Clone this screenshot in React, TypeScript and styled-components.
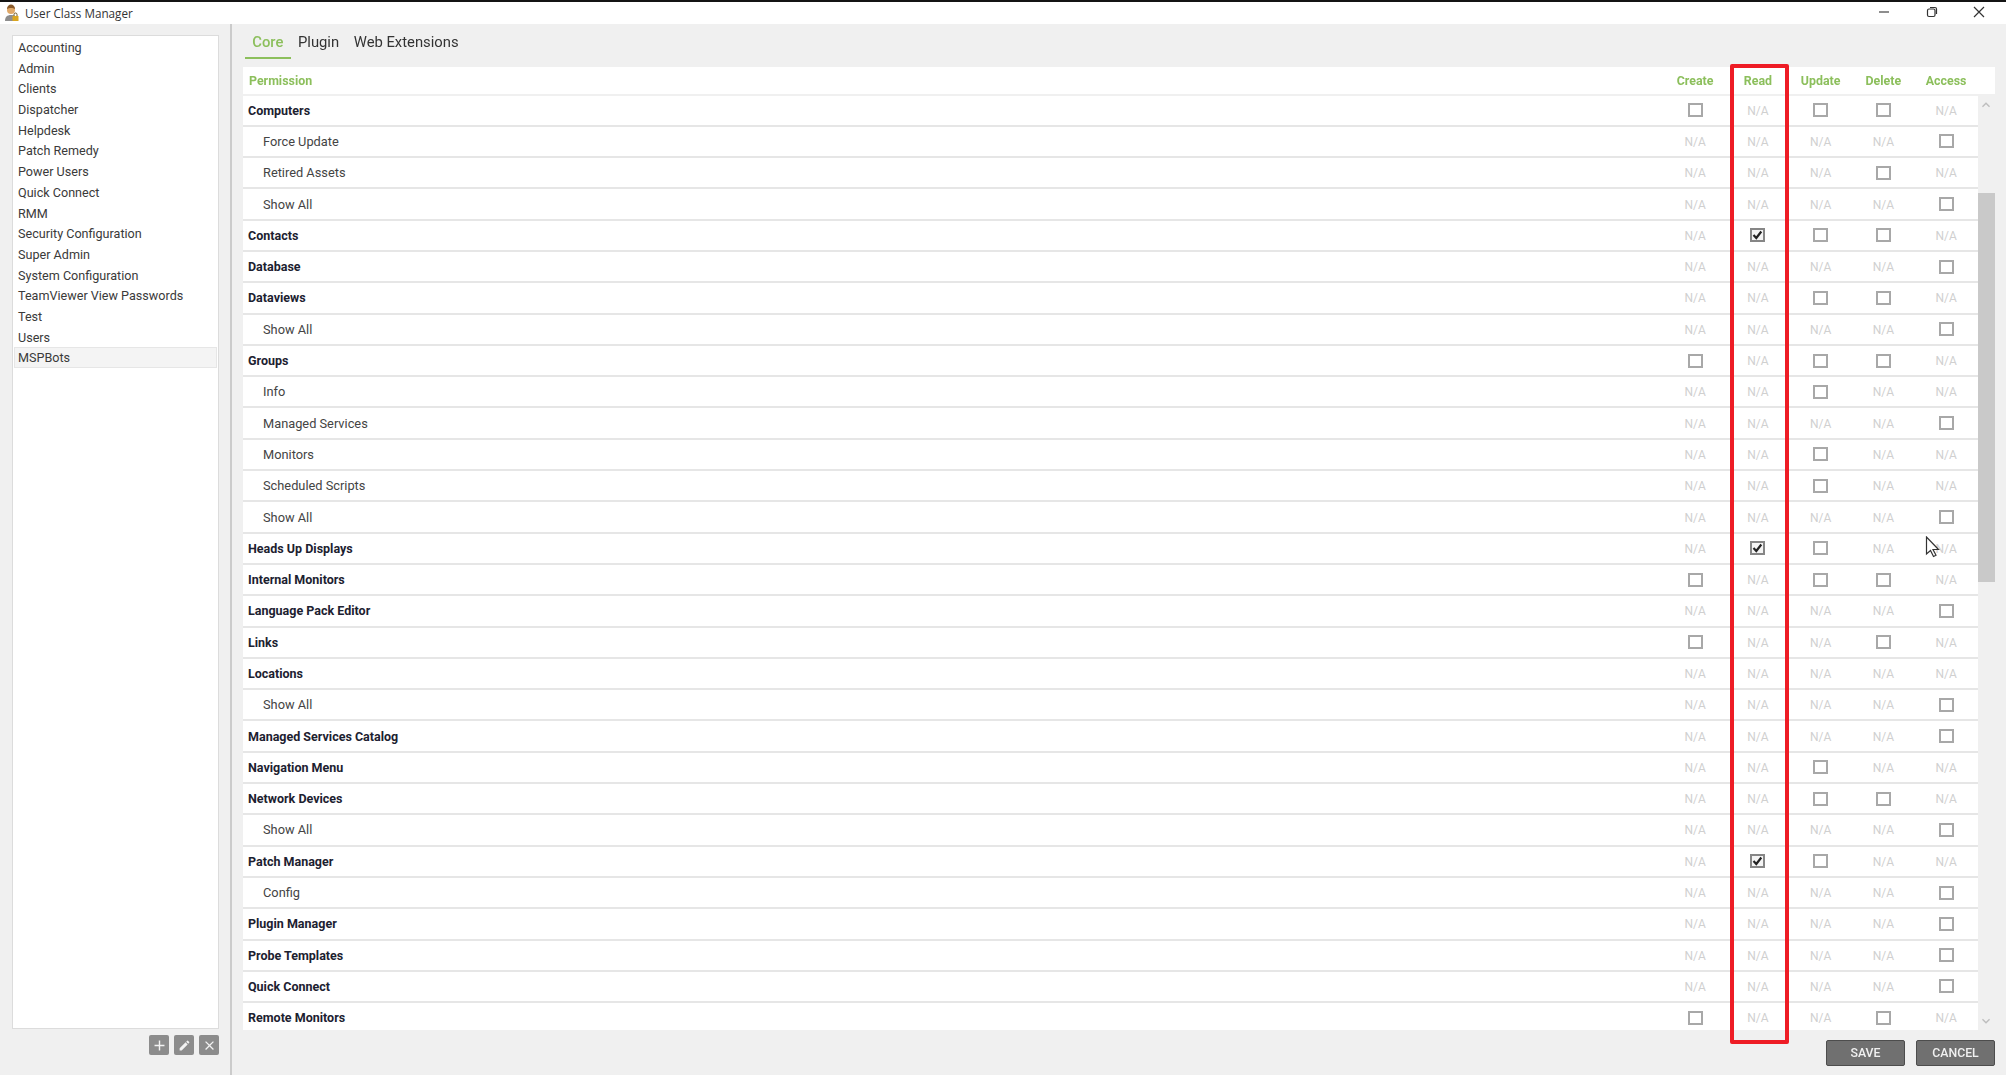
import styled, { createGlobalStyle } from 'styled-components'
import { MdAdd, MdClose, MdEdit, MdKeyboardArrowDown, MdKeyboardArrowUp } from 'react-icons/md'

const GREEN = '#8cbf5c'
const ROW_HEIGHT = 31.3

type Cell = 'na' | 'box' | 'check'

type Permission = {
  name: string,
  child?: boolean,
  cells: Cell[],
}

const GROUPS = [
  'Accounting', 'Admin', 'Clients', 'Dispatcher', 'Helpdesk', 'Patch Remedy', 'Power Users',
  'Quick Connect', 'RMM', 'Security Configuration', 'Super Admin', 'System Configuration',
  'TeamViewer View Passwords', 'Test', 'Users', 'MSPBots',
]

const COLUMNS = ['Create', 'Read', 'Update', 'Delete', 'Access']

// c = create, r = read (checked), u = update, d = delete, a = access
const row = (name: string, flags = '', child = false): Permission => ({
  name,
  child,
  cells: ['c', 'r', 'u', 'd', 'a'].map((f) => {
    if (!flags.includes(f)) return 'na'
    return f === 'r' ? 'check' : 'box'
  }),
})

const PERMISSIONS: Permission[] = [
  row('Computers', 'cud'),
  row('Force Update', 'a', true),
  row('Retired Assets', 'd', true),
  row('Show All', 'a', true),
  row('Contacts', 'rud'),
  row('Database', 'a'),
  row('Dataviews', 'ud'),
  row('Show All', 'a', true),
  row('Groups', 'cud'),
  row('Info', 'u', true),
  row('Managed Services', 'a', true),
  row('Monitors', 'u', true),
  row('Scheduled Scripts', 'u', true),
  row('Show All', 'a', true),
  row('Heads Up Displays', 'ru'),
  row('Internal Monitors', 'cud'),
  row('Language Pack Editor', 'a'),
  row('Links', 'cd'),
  row('Locations'),
  row('Show All', 'a', true),
  row('Managed Services Catalog', 'a'),
  row('Navigation Menu', 'u'),
  row('Network Devices', 'ud'),
  row('Show All', 'a', true),
  row('Patch Manager', 'ru'),
  row('Config', 'a', true),
  row('Plugin Manager', 'a'),
  row('Probe Templates', 'a'),
  row('Quick Connect', 'a'),
  row('Remote Monitors', 'cd'),
]

const GlobalStyle = createGlobalStyle`
  html, body {
    margin: 0;
    height: 100%;
    overflow: hidden;
    background: #f0f0f0;
    font-family: Roboto, "Liberation Sans", sans-serif;
  }
`

const Wrap = styled.div`
  position: relative;
  display: flex;
  flex-direction: column;
  width: 2006px;
  height: 1075px;
  overflow: hidden;
  border-top: 2px solid #141414;
  box-sizing: border-box;
  filter: blur(0.35px);
`

const TitleBar = styled.div`
  display: flex;
  align-items: center;
  flex: none;
  box-sizing: border-box;
  height: 22px;
  padding: 0 0 1px 4px;
  background: #fff;
`

const WindowTitle = styled.span`
  margin-left: 5px;
  font-family: "Open Sans", sans-serif;
  font-size: 11.7px;
  color: #333;
`

const WindowControls = styled.div`
  display: flex;
  align-items: center;
  margin: 0 0 2px auto;
  padding-right: 21px;
  gap: 35.5px;
`

const Body = styled.div`
  display: flex;
  flex: 1;
  min-height: 0;
`

const Sidebar = styled.div`
  display: flex;
  flex-direction: column;
  flex: none;
  box-sizing: border-box;
  width: 232px;
  padding: 11px 11px 0 12px;
  border-right: 2px solid #cbcbcb;
`

const GroupList = styled.div`
  flex: none;
  box-sizing: border-box;
  height: 994px;
  width: 207px;
  padding-top: 1px;
  background: #fff;
  border: 1px solid #dcdcdc;
`

const GroupItem = styled.div<{ $selected?: boolean }>`
  box-sizing: border-box;
  height: 20.7px;
  line-height: 19px;
  padding-left: 3px;
  margin: 0 1px;
  font-size: 12.6px;
  color: #3a3a3a;
  background: ${(p) => (p.$selected ? '#f4f4f4' : 'transparent')};
  border: 1px solid ${(p) => (p.$selected ? '#e6e6e6' : 'transparent')};
`

const GroupTools = styled.div`
  display: flex;
  justify-content: flex-end;
  gap: 5px;
  margin-top: 6px;
`

const ToolButton = styled.div`
  display: flex;
  align-items: center;
  justify-content: center;
  width: 20px;
  height: 20px;
  border-radius: 2px;
  background: #8c8c8c;
  color: #f2f2f2;
`

const Main = styled.div`
  display: flex;
  flex-direction: column;
  flex: 1;
  min-width: 0;
  padding: 0 11px;
`

const Tabs = styled.div`
  display: flex;
  flex: none;
  height: 35px;
  padding-left: 2px;
  margin-bottom: 8px;
`

const Tab = styled.div<{ $active?: boolean }>`
  display: flex;
  align-items: center;
  box-sizing: border-box;
  padding: 2px 7.3px 0;
  font-size: 14.8px;
  color: ${(p) => (p.$active ? GREEN : '#333')};
  font-weight: ${(p) => (p.$active ? 500 : 400)};
  border-bottom: 2px solid ${(p) => (p.$active ? GREEN : 'transparent')};
`

const Grid = styled.div`
  display: grid;
  grid-template-columns: 1fr repeat(5, 62.75px);
  align-items: center;
`

const HeaderRow = styled(Grid)`
  flex: none;
  height: 27px;
  margin-bottom: 1.500px;
  padding-right: 17.5px;
  background: #fff;
  color: ${GREEN};
  font-size: 12.4px;
  font-weight: 700;
`

const HeaderName = styled.div`
  padding-left: 6px;
`

const HeaderCell = styled.div`
  text-align: center;
`

const TableBody = styled.div`
  display: flex;
  flex: none;
  height: 934.5px;
`

const Rows = styled.div`
  flex: 1;
  min-width: 0;
  overflow: hidden;
`

const PermissionRow = styled(Grid)`
  box-sizing: border-box;
  height: ${ROW_HEIGHT}px;
  background: #fff;
  border-bottom: 2px solid #e6e6e6;
`

const RowName = styled.div<{ $child?: boolean }>`
  padding-left: ${(p) => (p.$child ? 20 : 5)}px;
  font-size: ${(p) => (p.$child ? 12.8 : 12.5)}px;
  font-weight: ${(p) => (p.$child ? 400 : 700)};
  color: ${(p) => (p.$child ? '#444' : '#1c2130')};
`

const NotApplicable = styled.div`
  padding-top: 1px;
  text-align: center;
  font-size: 12px;
  color: #d0d0d0;
`

const CheckCell = styled.div`
  display: flex;
  justify-content: center;
`

const Checkbox = styled.div<{ $checked?: boolean }>`
  display: flex;
  align-items: center;
  justify-content: center;
  box-sizing: border-box;
  width: 15px;
  height: 14px;
  border: 2px solid ${(p) => (p.$checked ? '#868686' : '#a8a8a8')};
  background: ${(p) => (p.$checked ? '#f4f4f4' : '#fff')};
`

const Scrollbar = styled.div`
  display: flex;
  flex-direction: column;
  align-items: center;
  flex: none;
  width: 17.5px;
  color: #bdbdbd;
`

const ArrowSlot = styled.div`
  display: flex;
  justify-content: center;
  padding-top: 1px;
  height: 96.5px;
`

const Thumb = styled.div`
  flex: none;
  width: 100%;
  height: 389px;
  background: #c9c9c9;
`

const BottomArrow = styled.div`
  display: flex;
  margin-top: auto;
  padding-bottom: 1px;
`

const Footer = styled.div`
  display: flex;
  justify-content: flex-end;
  gap: 11px;
  margin-top: 10px;
`

const Button = styled.div`
  display: flex;
  align-items: center;
  justify-content: center;
  box-sizing: border-box;
  width: 79px;
  height: 26px;
  border: 1px solid #4d4d4d;
  border-radius: 2px;
  background: #707070;
  color: #f0f0f0;
  font-size: 12.3px;
  font-weight: 500;
`

const Highlight = styled.div`
  position: absolute;
  left: 1730px;
  top: 62px;
  box-sizing: border-box;
  width: 59px;
  height: 980px;
  border: 4px solid #ee1c25;
  border-radius: 2px;
  pointer-events: none;
`

const Cursor = styled.svg`
  position: absolute;
  left: 1925px;
  top: 534px;
`

const UserIcon = () => (
  <svg width="16" height="18" viewBox="0 0 16 18">
    <path d="M1 17c0-4 2-6 6-6s6 2 6 6z" fill="#8d8d8d" />
    <circle cx="7" cy="6" r="4" fill="#e0a868" />
    <path d="M3 5c0-3 2-4.500 4-4.500S11 2 11 5C9 3.500 5 3.500 3 5z" fill="#8a5a2a" />
    <rect x="8.500" y="12" width="6" height="5" fill="#d9a520" />
    <path d="M10 12v-1.500a1.500 1.500 0 0 1 3 0V12" fill="none" stroke="#6b5320" />
  </svg>
)

const WindowButtons = () => (
  <WindowControls>
    <svg width="12" height="12" viewBox="0 0 12 12">
      <path d="M1 6h10" stroke="#444" strokeWidth="1.200" />
    </svg>
    <svg width="12" height="12" viewBox="0 0 12 12" fill="none" stroke="#333" strokeWidth="1.200">
      <rect x="1.500" y="3" width="7.500" height="7.500" rx="1.500" />
      <path d="M4 1.500h5a1.500 1.500 0 0 1 1.500 1.500v5" />
    </svg>
    <svg width="12" height="12" viewBox="0 0 12 12">
      <path d="M1 1l10 10M11 1L1 11" stroke="#333" strokeWidth="1.200" />
    </svg>
  </WindowControls>
)

const renderCell = (cell: Cell, key: number) => {
  if (cell === 'na') return <NotApplicable key={key}>N/A</NotApplicable>
  return (
    <CheckCell key={key}>
      <Checkbox $checked={cell === 'check'}>
        {cell === 'check' && (
          <svg width="11" height="10" viewBox="0 0 11 10">
            <path d="M1.500 5l2.800 3 5-6.500" fill="none" stroke="#222" strokeWidth="2.200" />
          </svg>
        )}
      </Checkbox>
    </CheckCell>
  )
}

const App = () => {
  return (
    <Wrap>
      <GlobalStyle />
      <TitleBar>
        <UserIcon />
        <WindowTitle>User Class Manager</WindowTitle>
        <WindowButtons />
      </TitleBar>
      <Body>
        <Sidebar>
          <GroupList>
            {GROUPS.map((group) => (
              <GroupItem key={group} $selected={group === 'MSPBots'}>
                {group}
              </GroupItem>
            ))}
          </GroupList>
          <GroupTools>
            <ToolButton><MdAdd size={17} /></ToolButton>
            <ToolButton><MdEdit size={13} /></ToolButton>
            <ToolButton><MdClose size={15} /></ToolButton>
          </GroupTools>
        </Sidebar>
        <Main>
          <Tabs>
            <Tab $active>Core</Tab>
            <Tab>Plugin</Tab>
            <Tab>Web Extensions</Tab>
          </Tabs>
          <HeaderRow>
            <HeaderName>Permission</HeaderName>
            {COLUMNS.map((column) => (
              <HeaderCell key={column}>{column}</HeaderCell>
            ))}
          </HeaderRow>
          <TableBody>
            <Rows>
              {PERMISSIONS.map((permission, i) => (
                <PermissionRow key={i}>
                  <RowName $child={permission.child}>{permission.name}</RowName>
                  {permission.cells.map(renderCell)}
                </PermissionRow>
              ))}
            </Rows>
            <Scrollbar>
              <ArrowSlot><MdKeyboardArrowUp size={16} /></ArrowSlot>
              <Thumb />
              <BottomArrow><MdKeyboardArrowDown size={16} /></BottomArrow>
            </Scrollbar>
          </TableBody>
          <Footer>
            <Button>SAVE</Button>
            <Button>CANCEL</Button>
          </Footer>
        </Main>
      </Body>
      <Highlight />
      <Cursor width="16" height="22" viewBox="0 0 16 22">
        <path d="M1.500 1v17l4-3.500 3 6 2.500-1.200-3-5.800h5.500z" fill="#fff" stroke="#333" strokeWidth="1.200" />
      </Cursor>
    </Wrap>
  )
}

export default App
